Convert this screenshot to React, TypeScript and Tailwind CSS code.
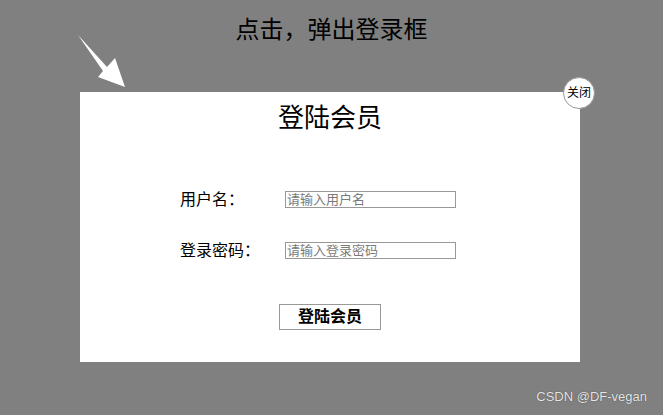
import React from "react";

const font = "font-['Liberation_Sans','Noto_Sans_CJK_SC',sans-serif]";

const FormRow: React.FC<{ label: string; placeholder: string; type?: string }> = ({
  label,
  placeholder,
  type = "text",
}) => {
  return (
    <div className="flex items-center h-[17px] pl-[100px]">
      <span className="w-[105px] text-[16px] leading-[17px] text-black">{label}</span>
      <input
        type={type}
        placeholder={placeholder}
        className="w-[171px] h-[17px] border border-[#999] px-[1px] text-[13px] leading-[15px] outline-none placeholder:text-[#7a7a7a]"
      />
    </div>
  );
};

export default function App() {
  return (
    <div className={`relative w-full h-[415px] overflow-hidden bg-[#808080] ${font}`}>
      {/* arrow pointing at the dialog */}
      <svg className="absolute left-[70px] top-[30px]" width="64" height="64" viewBox="70 30 64 64">
        <polygon points="78,35 107,67 115,58 125,87 98,77 103,71" fill="#fff" />
      </svg>

      <h1 className="pt-[14px] text-center text-[24px] leading-[32px] text-black">点击，弹出登录框</h1>

      <div className="relative mt-[46px] ml-[80px] w-[500px] h-[270px] bg-white">
        <h2 className="pt-[9px] text-center text-[26px] leading-[34px] text-black">登陆会员</h2>

        <div className="mt-[56px] flex flex-col gap-[34px]">
          <FormRow label="用户名：" placeholder="请输入用户名" />
          <FormRow label="登录密码：" placeholder="请输入登录密码" type="password" />
        </div>

        <button className="mt-[45px] mx-auto flex items-center justify-center w-[102px] h-[26px] border border-[#999] bg-white text-[16px] font-bold text-black">
          登陆会员
        </button>

        <button className="absolute -right-[15px] -top-[15px] flex items-center justify-center w-8 h-8 rounded-full border border-[#999] bg-white text-[12px] text-black">
          关闭
        </button>
      </div>

      <div className="absolute right-[16px] bottom-[10px] text-[13px] leading-[16px] text-[#e6e6e6] [text-shadow:0_0_1px_#333]">
        CSDN @DF-vegan
      </div>
    </div>
  );
}
